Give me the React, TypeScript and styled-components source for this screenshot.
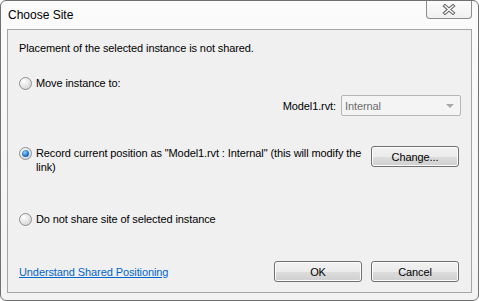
import styled, { createGlobalStyle } from "styled-components";

const GlobalStyle = createGlobalStyle`
  html, body {
    margin: 0;
    padding: 0;
    background: #ffffff;
  }
  * {
    box-sizing: border-box;
  }
`;

const CloseGlyph = () => (
  <svg width="14" height="11" viewBox="0 0 14 11">
    <g strokeLinecap="square">
      <path d="M3 2 L11 9 M11 2 L3 9" stroke="#6b6b6b" strokeWidth="3.6" />
      <path d="M3 2 L11 9 M11 2 L3 9" stroke="#ffffff" strokeWidth="1.4" />
    </g>
  </svg>
);

type RadioProps = { checked?: boolean; label: React.ReactNode };

const Radio = ({ checked, label }: RadioProps) => (
  <RadioRow>
    <RadioDot $checked={checked} />
    <RadioText>{label}</RadioText>
  </RadioRow>
);

const App = () => {
  return (
    <>
      <GlobalStyle />
      <Window>
        <TitleBar>
          <Title>Choose Site</Title>
          <CloseButton aria-label="Close">
            <CloseGlyph />
          </CloseButton>
        </TitleBar>

        <Client>
          <Heading>Placement of the selected instance is not shared.</Heading>

          {/* move instance */}
          <Section $gap={21}>
            <Radio label="Move instance to:" />
          </Section>
          <ModelRow>
            <FieldLabel>Model1.rvt:</FieldLabel>
            <Select>
              <span>Internal</span>
              <Caret />
            </Select>
          </ModelRow>

          {/* record position */}
          <Section $gap={30}>
            <RecordRow>
              <Radio
                checked
                label={
                  <>
                    Record current position as "Model1.rvt : Internal" (this will modify the
                    <br />
                    link)
                  </>
                }
              />
              <Button $width={88}>Change...</Button>
            </RecordRow>
          </Section>

          {/* do not share */}
          <Section $gap={38}>
            <Radio label="Do not share site of selected instance" />
          </Section>

          <Footer>
            <HelpLink href="#">Understand Shared Positioning</HelpLink>
            <Buttons>
              <Button $width={88}>OK</Button>
              <Button $width={88}>Cancel</Button>
            </Buttons>
          </Footer>
        </Client>
      </Window>
    </>
  );
};

export default App;

// dialog frame
const Window = styled.div`
  width: 479px;
  height: 301px;
  display: flex;
  flex-direction: column;
  border: 1px solid #707070;
  border-radius: 6px;
  background: linear-gradient(#fbfbfb, #f3f3f3);
  font-family: "Liberation Sans", Arial, sans-serif;
  font-size: 11px;
  letter-spacing: -0.1px;
  color: #000000;
  overflow: hidden;
`;

const TitleBar = styled.div`
  height: 28px;
  display: flex;
  justify-content: space-between;
  align-items: flex-start;
  padding: 0 6px 0 7px;
`;

const Title = styled.div`
  margin-top: 7px;
  font-size: 12px;
  line-height: 15px;
  letter-spacing: 0;
`;

const CloseButton = styled.div`
  width: 46px;
  height: 19px;
  margin-top: -1px;
  display: flex;
  align-items: center;
  justify-content: center;
  border: 1px solid #8c8c8c;
  border-top: none;
  border-radius: 0 0 4px 4px;
  background: linear-gradient(#fdfdfd, #f0f0f0);
  svg {
    margin-top: 1px;
  }
`;

// inner panel
const Client = styled.div`
  flex: 1;
  margin: 0 6px 7px 6px;
  padding: 11px 10px 10px 11px;
  display: flex;
  flex-direction: column;
  border: 1px solid #a5a5a5;
  background: #f0f0f0;
`;

const Heading = styled.div`
  line-height: 14px;
`;

const Section = styled.div<{ $gap: number }>`
  margin-top: ${(p) => p.$gap}px;
`;

const RadioRow = styled.div`
  display: flex;
  align-items: flex-start;
  gap: 4px;
`;

const RadioDot = styled.span<{ $checked?: boolean }>`
  position: relative;
  flex: none;
  width: 13px;
  height: 13px;
  margin-top: 1px;
  border-radius: 50%;
  border: 1px solid #8e8f8f;
  background: radial-gradient(circle at 35% 30%, #ffffff, #dcdcdc 70%, #c9c9c9);
  &::after {
    content: "";
    display: ${(p) => (p.$checked ? "block" : "none")};
    position: absolute;
    left: 2px;
    top: 2px;
    width: 7px;
    height: 7px;
    border-radius: 50%;
    background: radial-gradient(circle at 40% 35%, #8fd3ff, #1f6fc7 60%, #0b3f8a);
  }
`;

const RadioText = styled.div`
  line-height: 14px;
  white-space: nowrap;
`;

const ModelRow = styled.div`
  margin-top: 5px;
  display: flex;
  justify-content: flex-end;
  align-items: center;
  gap: 5px;
`;

const FieldLabel = styled.span`
  line-height: 14px;
`;

const Select = styled.div`
  width: 120px;
  height: 21px;
  display: flex;
  align-items: center;
  justify-content: space-between;
  padding: 0 6px 0 3px;
  border: 1px solid #b6b6b6;
  border-radius: 2px;
  background: #f4f4f4;
  color: #6d6d6d;
`;

const Caret = styled.span`
  width: 0;
  height: 0;
  border-left: 4px solid transparent;
  border-right: 4px solid transparent;
  border-top: 4px solid #a8a8a8;
`;

const RecordRow = styled.div`
  display: flex;
  justify-content: space-between;
  align-items: flex-start;
  padding-right: 2px;
`;

const Button = styled.div<{ $width: number }>`
  flex: none;
  width: ${(p) => p.$width}px;
  height: 21px;
  display: flex;
  align-items: center;
  justify-content: center;
  border: 1px solid #707070;
  border-radius: 3px;
  background: linear-gradient(#f2f2f2 0%, #ebebeb 50%, #dddddd 51%, #cfcfcf 100%);
  box-shadow: inset 0 0 0 1px #fcfcfc;
  color: #000000;
  line-height: 14px;
`;

const Footer = styled.div`
  margin-top: auto;
  display: flex;
  justify-content: space-between;
  align-items: center;
  padding-right: 2px;
`;

const HelpLink = styled.a`
  color: #0066cc;
  text-decoration: underline;
  line-height: 14px;
`;

const Buttons = styled.div`
  display: flex;
  gap: 9px;
`;
